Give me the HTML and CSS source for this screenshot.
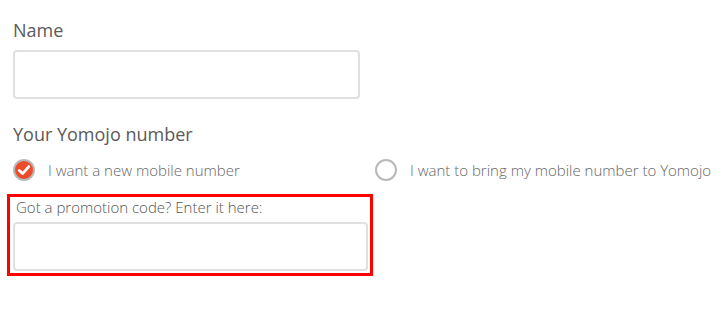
FILE: index.html
```html
<!DOCTYPE html>
<html lang="en">
<head>
<meta charset="utf-8">
<title>Form</title>
<link rel="stylesheet" href="styles.css">
</head>
<body>
<form class="form">
  <label class="field-label" for="name">Name</label>
  <input class="text-input name-input" id="name" type="text">

  <div class="section-label">Your Yomojo number</div>
  <div class="radio-row">
    <label class="radio-option">
      <span class="radio checked">
        <svg viewBox="0 0 22 22" width="22" height="22" aria-hidden="true">
          <circle cx="11" cy="11" r="10" fill="#ee4b2b" stroke="#b8b8b8" stroke-width="2"/>
          <path d="M6.3 11.4 L9.6 14.6 L15.8 7.6" fill="none" stroke="#fff" stroke-width="2.8" stroke-linecap="round" stroke-linejoin="round"/>
        </svg>
      </span>
      <span class="radio-text">I want a new mobile number</span>
    </label>
    <label class="radio-option">
      <span class="radio">
        <svg viewBox="0 0 22 22" width="22" height="22" aria-hidden="true">
          <circle cx="11" cy="11" r="10" fill="#fff" stroke="#b8b8b8" stroke-width="2"/>
        </svg>
      </span>
      <span class="radio-text">I want to bring my mobile number to Yomojo</span>
    </label>
  </div>

  <div class="promo">
    <label class="promo-label" for="promo">Got a promotion code? Enter it here:</label>
    <input class="text-input promo-input" id="promo" type="text">
  </div>
</form>
</body>
</html>
```

FILE: styles.css
```css
* { box-sizing: border-box; }

html, body {
  margin: 0;
  padding: 0;
  background: #fff;
}

body {
  font-family: "Open Sans", "Liberation Sans", sans-serif;
  color: #555;
}

.form {
  display: flex;
  flex-direction: column;
  align-items: flex-start;
  padding: 18px 0 0 13px;
}

.field-label,
.section-label {
  display: block;
  font-size: 18px;
  line-height: 24px;
  font-weight: 400;
  color: #5a5a5a;
}

.text-input {
  display: block;
  height: 49px;
  border: 2px solid #e0e0e0;
  border-radius: 4px;
  background: #fff;
  padding: 0 10px;
  font: inherit;
  outline: none;
}

.name-input {
  width: 347px;
  margin-top: 8px;
}

.section-label {
  margin-top: 23px;
}

.radio-row {
  display: grid;
  grid-template-columns: 362px auto;
  margin-top: 12px;
}

.radio-option {
  display: flex;
  align-items: center;
  gap: 13px;
  height: 24px;
}

.radio {
  display: flex;
  width: 22px;
  height: 22px;
}

.radio-text {
  font-size: 15px;
  font-weight: 300;
  color: #666;
  white-space: nowrap;
}

.promo {
  margin: 12px 0 0 -6px;
  width: 366px;
  border: 3px solid #ff0000;
  padding: 0 2px 2px 3px;
}

.promo-label {
  display: block;
  font-size: 15px;
  line-height: 20px;
  font-weight: 300;
  color: #555;
  padding-left: 3px;
}

.promo-input {
  width: 355px;
  margin-top: 5px;
}
```
